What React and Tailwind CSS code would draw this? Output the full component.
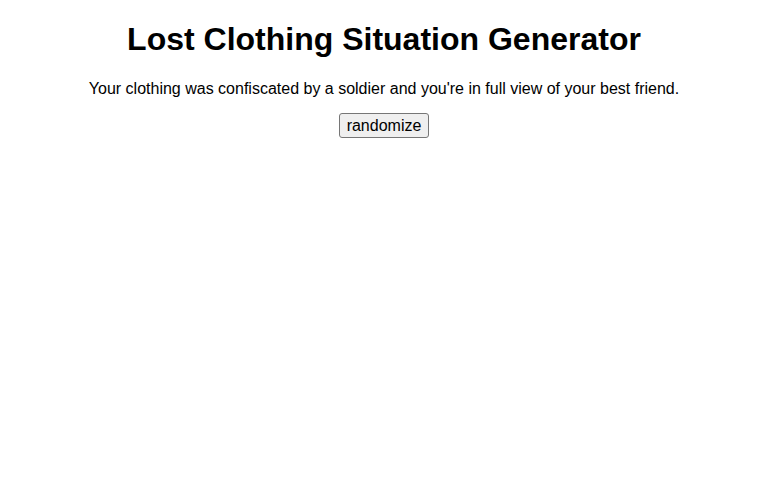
import React, { useState } from "react";

const situations = [
  "Your clothing was confiscated by a soldier and you're in full view of your best friend.",
];

export default function App() {
  const [idx, setIdx] = useState(0);

  return (
    <div className="min-h-screen bg-white text-black text-center font-['Liberation_Sans',Arial,sans-serif]">
      <h1 className="pt-[21px] text-[32px] leading-[37px] font-bold">
        Lost Clothing Situation Generator
      </h1>
      <p className="mt-[22px] text-base leading-[18px]">{situations[idx]}</p>
      <button
        onClick={() => setIdx((i) => (i + 1) % situations.length)}
        className="mt-[15px] h-[25px] px-[7px] text-base leading-[18px] bg-[#efefef] border border-[#767676] rounded-[3px] text-black"
      >
        randomize
      </button>
    </div>
  );
}
